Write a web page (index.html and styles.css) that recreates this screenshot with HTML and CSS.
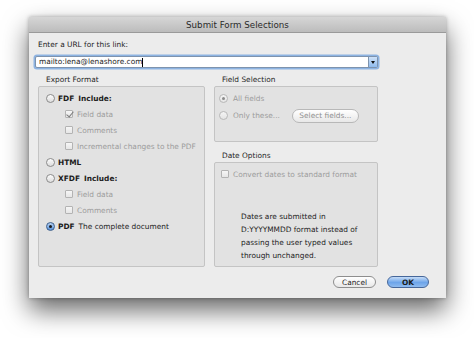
FILE: index.html
```html
<!DOCTYPE html>
<html lang="en">
<head>
  <meta charset="UTF-8" />
  <title>Submit Form Selections</title>
  <link rel="stylesheet" href="styles.css">
</head>
<body>

  <div class="sheet">
    <div class="titlebar">Submit Form Selections</div>

    <div class="content">
      <div class="prompt">Enter a URL for this link:</div>
      <div class="combo">
        <span class="url">mailto:lena@lenashore.com</span><span class="caret"></span>
        <span class="arrow"></span>
      </div>

      <div class="columns">
        <!-- EXPORT FORMAT -->
        <div class="col left">
          <div class="group-label">Export Format</div>
          <div class="group export">
            <div class="row"><span class="radio"></span><b>FDF</b><b class="sub">Include:</b></div>
            <div class="row indent off"><span class="check on"></span>Field data</div>
            <div class="row indent off"><span class="check"></span>Comments</div>
            <div class="row indent off"><span class="check"></span>Incremental changes to the PDF</div>
            <div class="row"><span class="radio"></span><b>HTML</b></div>
            <div class="row"><span class="radio"></span><b>XFDF</b><b class="sub">Include:</b></div>
            <div class="row indent off"><span class="check"></span>Field data</div>
            <div class="row indent off"><span class="check"></span>Comments</div>
            <div class="row"><span class="radio on"></span><b>PDF</b><span class="sub">The complete document</span></div>
          </div>
        </div>

        <!-- FIELDS + DATES -->
        <div class="col right">
          <div class="group-label">Field Selection</div>
          <div class="group fields">
            <div class="row off"><span class="radio dot"></span>All fields</div>
            <div class="row off"><span class="radio"></span>Only these...<span class="btn small">Select fields...</span></div>
          </div>

          <div class="group-label date-label">Date Options</div>
          <div class="group dates">
            <div class="row off"><span class="check"></span>Convert dates to standard format</div>
            <p class="note">Dates are submitted in D:YYYYMMDD format instead of passing the user typed values through unchanged.</p>
          </div>
        </div>
      </div>

      <div class="actions">
        <span class="btn">Cancel</span>
        <span class="btn primary">OK</span>
      </div>
    </div>
  </div>

</body>
</html>
```

FILE: styles.css
```css
* {
  box-sizing: border-box;
}

html {
  background-color: #fff;
}

body {
  font-family: 'DejaVu Sans', sans-serif;
  font-size: 7.4px;
  margin: 0;
  padding: 17px 0 40px 29px;
  color: #1c1c1c;
}

.sheet {
  width: 417px;
  background-color: #ececec;
  box-shadow: 0 12px 24px rgba(0, 0, 0, 0.6), 0 0 4px rgba(0, 0, 0, 0.3);
}

.titlebar {
  height: 16px;
  line-height: 16px;
  text-align: center;
  font-size: 8.7px;
  color: #2a2a2a;
  background: linear-gradient(#d6d6d6, #bcbcbc);
  border-bottom: 1px solid #9a9a9a;
}

.content {
  padding: 7px 0 10px 9px;
}

.prompt {
  line-height: 10px;
}

.combo {
  position: relative;
  width: 343px;
  height: 12px;
  margin: 6px 0 0 -3px;
  background-color: #fff;
  border: 1px solid #7e93ad;
  box-shadow: 0 0 0 1.5px #8db3e2;
  border-radius: 2px;
  padding-left: 3px;
  line-height: 10px;
  display: flex;
  align-items: center;
}

.caret {
  display: inline-block;
  width: 1px;
  height: 9px;
  background-color: #000;
}

.arrow {
  position: absolute;
  right: 0;
  top: 0;
  bottom: 0;
  width: 9px;
  background: linear-gradient(#cfe2f8, #8fbbee);
  border-left: 1px solid #7e93ad;
}

.arrow::after {
  content: "";
  position: absolute;
  left: 2px;
  top: 4px;
  border-left: 2px solid transparent;
  border-right: 2px solid transparent;
  border-top: 3px solid #111;
}

.columns {
  display: flex;
  gap: 9px;
  margin-top: 7px;
  width: 340px;
}

.col {
  display: flex;
  flex-direction: column;
}

.col.left {
  width: 167px;
}

.col.right {
  width: 164px;
}

.group-label {
  line-height: 10px;
  padding-left: 8px;
  color: #262626;
}

.date-label {
  margin-top: 9px;
}

.group {
  margin-top: 1px;
  background-color: #e2e2e2;
  border: 1px solid #c4c4c4;
  border-radius: 2px;
}

.export {
  flex-grow: 1;
  min-height: 181px;
  padding: 3px 0 0 7px;
}

.row {
  display: flex;
  align-items: center;
  height: 16px;
  white-space: nowrap;
}

.row b {
  font-weight: 700;
}

.row .sub {
  margin-left: 4px;
}

.row.indent {
  padding-left: 19px;
}

.row.off {
  color: #9c9c9c;
}

.radio {
  width: 9px;
  height: 9px;
  border-radius: 50%;
  border: 1px solid #8b8b8b;
  background: linear-gradient(#fdfdfd, #dcdcdc);
  margin-right: 3px;
  position: relative;
  flex-shrink: 0;
}

.radio.on {
  border-color: #3c5f8c;
  background: linear-gradient(#b7d2f3, #5a93dc);
}

.radio.on::after,
.radio.dot::after {
  content: "";
  position: absolute;
  left: 2px;
  top: 2px;
  width: 3px;
  height: 3px;
  border-radius: 50%;
  background-color: #1a1a1a;
}

.off .radio {
  border-color: #b8b8b8;
  background: linear-gradient(#f4f4f4, #e4e4e4);
}

.radio.dot::after {
  background-color: #8a8a8a;
}

.check {
  width: 8px;
  height: 8px;
  border: 1px solid #b3b3b3;
  border-radius: 1px;
  background: linear-gradient(#f6f6f6, #e6e6e6);
  margin-right: 4px;
  position: relative;
  flex-shrink: 0;
}

.check.on::after {
  content: "";
  position: absolute;
  left: 2px;
  top: -1px;
  width: 3px;
  height: 6px;
  border-right: 1.3px solid #7a7a7a;
  border-bottom: 1.3px solid #7a7a7a;
  transform: rotate(40deg);
}

.fields {
  height: 56px;
  padding: 3px 0 0 4px;
}

.fields .row {
  height: 17px;
}

.fields .radio {
  margin-right: 5px;
}

.btn {
  display: inline-flex;
  align-items: center;
  justify-content: center;
  height: 12px;
  border: 1px solid #8e8e8e;
  border-radius: 7px;
  background: linear-gradient(#ffffff, #e8e8e8);
  color: #1c1c1c;
}

.btn.small {
  height: 14px;
  width: 67px;
  margin-left: 12px;
  border-color: #b8b8b8;
  color: #8f8f8f;
}

.dates {
  flex-grow: 1;
  padding: 4px 0 4px 6px;
  display: flex;
  flex-direction: column;
  justify-content: space-between;
}

.dates .row {
  height: 14px;
}

.note {
  margin: 0 0 0 20px;
  width: 124px;
  line-height: 13px;
  color: #1c1c1c;
}

.actions {
  display: flex;
  justify-content: flex-end;
  gap: 11px;
  margin-top: 9px;
  padding-right: 17px;
}

.actions .btn {
  width: 43px;
}

.btn.primary {
  width: 42px;
  border-color: #46679a;
  background: linear-gradient(#c5dcf7, #6ea5ea 55%, #8fbbef);
  font-weight: 700;
}
```
